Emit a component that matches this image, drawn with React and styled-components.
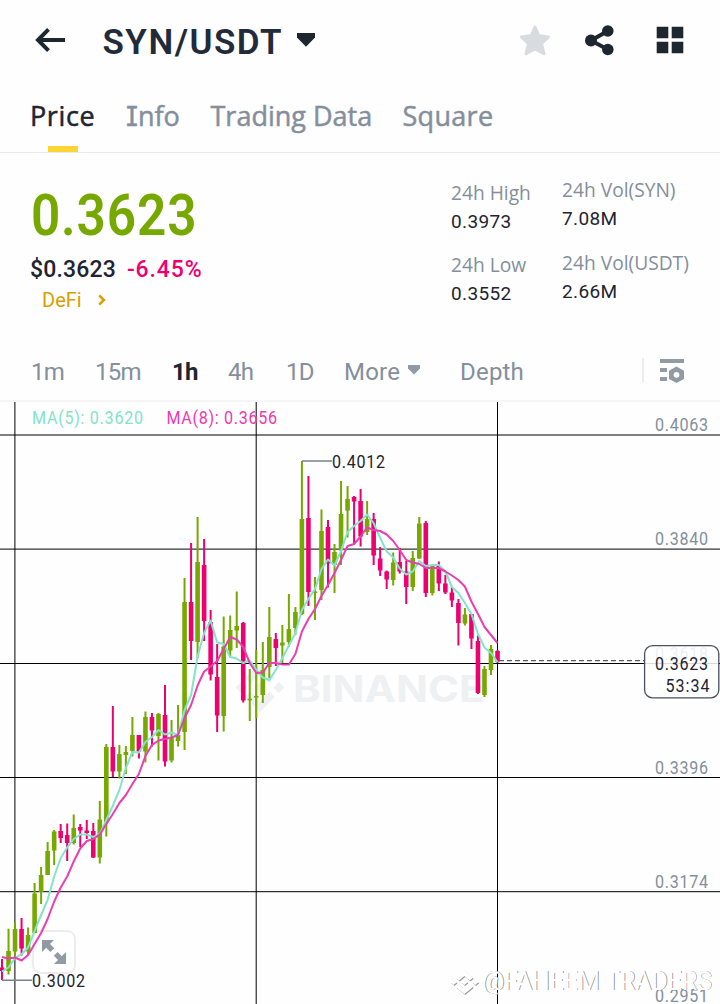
import React from 'react';
import styled, { createGlobalStyle } from 'styled-components';

const UP = '#76a800';
const DOWN = '#ef0070';
const STEP = 6.52;
const FIRST_X = 2;
const NARROW = 0.92;

// [high, low, body top, body bottom, 1 = up / 0 = down]
const candles = [
  [959, 980, 967.5, 971, 0], [928.7, 974.5, 951, 971, 1], [922, 959, 929, 951.5, 1],
  [918, 955.5, 929, 948.5, 0], [927.5, 955, 935, 951.5, 1], [883, 933, 893.5, 933, 1],
  [867, 904, 875, 892, 1], [842, 875, 851, 875, 1], [830, 865, 831.5, 850.5, 1],
  [824, 843, 831, 838, 0], [823.5, 861, 835, 843, 0], [814.5, 844.5, 828, 843, 1],
  [824, 847, 827, 830.5, 0], [820, 839, 830.5, 833, 0], [823, 858, 831, 857.5, 0],
  [801, 863.5, 819.5, 857.5, 1], [744, 836.5, 747, 822, 1], [706, 777, 747, 771.5, 0],
  [745, 778.5, 754, 771.5, 1], [746, 774, 752, 755, 1], [717, 756.5, 735, 751, 1],
  [735, 758.5, 735, 751.5, 0], [711.5, 762.5, 717, 751.5, 1], [713, 746.5, 717, 730.5, 0],
  [713, 760.5, 714, 736, 1], [685, 766.5, 715, 761.5, 0], [720, 762.5, 737.5, 760.5, 1],
  [705, 746.5, 735, 741, 1], [578, 750, 602, 732, 1], [543, 660, 602, 641, 0],
  [517, 658, 562, 642, 1], [539, 641, 565, 621, 0], [610, 680.5, 622, 674.5, 0],
  [644, 732, 677, 715.5, 0], [616.5, 731.5, 646.5, 716, 1], [615.5, 656, 630, 650.5, 1],
  [591.5, 648, 626, 630.5, 1], [622, 702.5, 623, 700.5, 0], [669, 721, 698.8, 700.3, 1],
  [650, 718, 696, 697.5, 1], [642, 703, 670, 695, 1], [607, 678, 637, 667, 1],
  [633, 666, 639, 648, 0], [625, 663, 642.5, 645.5, 1], [594, 647, 629, 642, 1],
  [607, 635, 612, 628, 1], [461, 615, 519, 614, 1], [476, 606, 518, 592, 0],
  [577, 620, 591.5, 593, 1], [509.5, 600, 531, 590, 1], [520, 587.5, 527, 563.5, 0],
  [544, 593, 552, 565, 1], [481, 565, 514, 550.5, 1], [486, 537.5, 499, 510.5, 1],
  [496, 544, 497, 501.5, 0], [489, 546.5, 501, 536.5, 0], [501, 535, 519, 532, 1],
  [513, 565, 519, 555.5, 0], [547, 576, 558.5, 570.5, 0], [570.5, 589, 571.5, 579.5, 0],
  [552.5, 585.5, 562.5, 580, 1], [548, 573.5, 562, 571.5, 0], [561, 604, 571.5, 587, 0],
  [551, 591, 558, 587, 1], [517, 559, 523.5, 558.5, 1], [521, 597, 523, 593, 0],
  [565, 595.5, 566, 593, 1], [561.5, 591, 566, 583.5, 0], [575, 594, 583.5, 592.5, 0],
  [587, 607, 592.5, 600.5, 0], [599, 645.5, 603, 623, 0], [608, 625.5, 614.5, 623.5, 1],
  [614, 649, 614, 638.5, 0], [635.5, 694, 641, 693, 0], [666, 697, 669, 695, 1],
  [645, 675, 649, 670, 1], [650, 663, 651, 661.5, 0],
];

const ma5 = [
  971.5, 967.5, 958, 954, 947.5, 931, 915, 900, 876.5, 858, 847.5, 839, 834.5, 834.5, 837, 834,
  820, 806, 790, 768, 752, 752.5, 742, 737, 730, 734.5, 732.5, 735, 710, 695, 656.5, 633,
  620.5, 642.5, 644, 657, 658.5, 663, 660.5, 670, 677.5, 680, 670, 658, 645.5, 633, 610, 599,
  589, 569, 559.5, 565.5, 551, 532, 526, 521, 514.5, 523, 538, 551.5, 557.5, 568.5, 574.5, 571.5,
  561, 566, 565, 565, 571.5, 587, 593, 603, 614, 634, 647.5, 653, 662,
];

const ma8 = [
  957, 958.5, 957.5, 960.5, 955, 944, 933, 919, 901.5, 887.5, 876.5, 861.5, 848.5, 841, 839, 834.5,
  824, 814, 803, 795, 784, 774, 756, 745, 740.5, 739, 737.5, 735, 718, 705, 685.5, 671.5,
  666.5, 661, 649, 637, 639.5, 647, 663, 673, 672.5, 663, 663, 664.5, 664.5, 654, 631.5, 619,
  609, 596, 585, 573, 560, 546, 544, 536.5, 527.5, 530, 531, 534.5, 541, 550, 560, 562.5,
  564, 568, 568, 568, 571.5, 575.5, 580, 586.5, 601.5, 614, 627, 635, 643,
];

const axis = [
  ['0.4063', 431], ['0.3840', 545], ['0.3618', 660],
  ['0.3396', 774], ['0.3174', 888], ['0.2951', 1002],
];

const stats = [
  { label: '24h High', value: '0.3973' },
  { label: '24h Vol(SYN)', value: '7.08M', raised: 3 },
  { label: '24h Low', value: '0.3552' },
  { label: '24h Vol(USDT)', value: '2.66M', raised: 2 },
];

const BINANCE_PATH =
  'M16.624 13.9202l2.7175 2.7154-7.353 7.353-7.353-7.352 2.7175-2.7164 4.6355 4.6595 4.6356-4.6595zm4.6366-4.6366L24 12l-2.7154 2.7164L18.5682 12l2.6924-2.7164zm-9.272.001l2.7163 2.6914-2.7164 2.7174v-.001L9.2721 12l2.7164-2.7154zm-9.2722-.001L5.4088 12l-2.6914 2.6924L0 12l2.7164-2.7164zM11.9885.0115l7.353 7.329-2.7174 2.7154-4.6356-4.6356-4.6355 4.6595-2.7174-2.7154 7.353-7.353z';

const xAt = (i) => FIRST_X + i * STEP;
const toPoints = (values) => values.map((y, i) => `${xAt(i).toFixed(1)},${y}`).join(' ');

// chart labels use a slightly narrowed face, w is the drawn width
const Label = ({ x, y, w, fill, children }) => (
  <ChartText transform={`translate(${x} ${y}) scale(${NARROW} 1)`} textLength={w / NARROW} fill={fill}>
    {children}
  </ChartText>
);

const Chart = () => (
  <ChartSvg viewBox="0 402 720 602">
    <g fill="#eef0f2">
      <path d={BINANCE_PATH} transform="translate(235.5 663) scale(2.04)" />
      <Watermark x="293" y="701.5" textLength="191.5" lengthAdjust="spacingAndGlyphs">BINANCE</Watermark>
    </g>

    <g stroke="#000" strokeWidth="1">
      {[435, 549.1, 663.5, 777.5, 891.7].map((y) => (
        <line key={y} x1="0" x2="720" y1={y} y2={y} />
      ))}
      {[14.9, 256.2, 497.5].map((x) => (
        <line key={x} x1={x} x2={x} y1="402" y2="1004" />
      ))}
    </g>

    {axis.map(([label, y]) => (
      <Label key={label} x={655} y={y} w={53} fill="#848e9c">{label}</Label>
    ))}

    {/* full screen button */}
    <rect x="33" y="931" width="42" height="42" rx="8" fill="#fff" fillOpacity="0.6" stroke="#ececec" strokeWidth="1.8" />
    <g fill="#929aa5">
      <path d="M42 940h12l-4 4 4.200 4.200-3.800 3.800-4.200-4.200-4.200 4.200z" />
      <path d="M66 964h-12l4-4-4.200-4.200 3.800-3.800 4.200 4.200 4.200-4.200z" />
    </g>

    {candles.map(([high, low, top, bottom, up], i) => (
      <g key={i} fill={up ? UP : DOWN}>
        <rect x={xAt(i) - 1} y={high} width="2" height={low - high} />
        <rect x={xAt(i) - 2.3} y={top} width="4.6" height={bottom - top} />
      </g>
    ))}

    <MaLine points={toPoints(ma5)} stroke="#86e3c9" />
    <MaLine points={toPoints(ma8)} stroke="#e83fb1" />

    <Label x={32} y={424} w={111} fill="#83e3c8">MA(5): 0.3620</Label>
    <Label x={166.5} y={424} w={110.5} fill="#e93cb0">MA(8): 0.3656</Label>

    {/* high and low marks */}
    <path d="M302 461h30M2 980.200h30" stroke="#76808f" strokeWidth="1.400" />
    <Label x={332} y={467.5} w={53} fill="#1e2430">0.4012</Label>
    <Label x={32} y={987} w={53} fill="#1e2430">0.3002</Label>

    {/* last price tag */}
    <line x1="499" x2="644" y1="660.7" y2="660.7" stroke="#565b66" strokeWidth="1.2" strokeDasharray="5 3" />
    <rect x="644.6" y="645.6" width="74.200" height="52.300" rx="8" fill="#fff" fillOpacity="0.86" stroke="#4a505c" strokeWidth="1.3" />
    <Label x={655} y={670} w={53} fill="#1e2430">0.3623</Label>
    <Label x={665.5} y={692} w={44} fill="#1e2430">53:34</Label>

    {/* author signature */}
    <path d={BINANCE_PATH} transform="translate(451.3 971.6) scale(1.16 0.98)" fill="#9c9c9c" />
    <path d={BINANCE_PATH} transform="translate(450.5 970.6) scale(1.16 0.98)" fill="#fff" />
    <Signature x="482.700" y="990.4" textLength="230" fill="#858585">@FAHEEM TRADERS</Signature>
    <Signature x="482" y="989.500" textLength="230" fill="#fff">@FAHEEM TRADERS</Signature>
  </ChartSvg>
);

const App = () => {
  return (
    <>
      <GlobalStyle />
      <Screen>
        <Header>
          <svg width="32" height="26" viewBox="0 0 32 26" fill="none" stroke="#1e2630" strokeWidth="4">
            <path d="M31 13H4M14.500 2.300L4 13l10.500 10.700" />
          </svg>
          <Pair>SYN/USDT</Pair>
          <svg width="18" height="14" viewBox="0 0 18 14" fill="#1e2630">
            <path d="M0 0h18v4.500L9 13.700 0 4.500z" />
          </svg>
          <HeaderIcons>
            <svg width="30" height="31" viewBox="0 0 30 31" fill="#d8dce1" stroke="#d8dce1" strokeWidth="3" strokeLinejoin="round">
              <path d="M15 2l3.800 8.600 9.700 1.300-7 6.800 2.500 10L15 24l-9 4.700 2.500-10-7-6.800 9.700-1.300z" />
            </svg>
            <svg width="30" height="31" viewBox="0 0 30 31" fill="#1e2630">
              <circle cx="6" cy="15.500" r="6" />
              <circle cx="22.800" cy="6" r="5.800" />
              <circle cx="22.800" cy="24.500" r="5.800" />
              <path d="M22.800 6L6 15.500l16.800 9" fill="none" stroke="#1e2630" strokeWidth="4" />
            </svg>
            <svg width="28" height="28" viewBox="0 0 28 28" fill="#1e2630">
              <path d="M.7.700h11.600v11.600H.700zM15.700.700h11.600v11.600H15.700zM.700 15.700h11.600v11.600H.700zM15.700 15.700h11.600v11.600H15.700z" />
            </svg>
          </HeaderIcons>
        </Header>

        <Tabs>
          <Tab $active $spacing={0.6}>Price</Tab>
          <Tab $spacing={0}><SerifI>I</SerifI>nfo</Tab>
          <Tab $spacing={0}>Trading Data</Tab>
          <Tab $spacing={0.3}>Square</Tab>
        </Tabs>

        <Summary>
          <div>
            <Price>0.3623</Price>
            <PriceSub>
              <span>$0.3623</span>
              <Change>-6.45%</Change>
            </PriceSub>
            <Tag>
              DeFi
              <svg width="8" height="12" viewBox="0 0 8 12" fill="none" stroke="#d89f00" strokeWidth="2.6">
                <path d="M1.200 1.300L5.900 6 1.200 10.700" />
              </svg>
            </Tag>
          </div>
          <Stats>
            {stats.map((stat) => (
              <Stat key={stat.label} $raised={stat.raised}>
                <StatLabel>{stat.label}</StatLabel>
                <StatValue>{stat.value}</StatValue>
              </Stat>
            ))}
          </Stats>
        </Summary>

        <Intervals>
          <Interval>1m</Interval>
          <Interval>15m</Interval>
          <Interval $active>1h</Interval>
          <Interval>4h</Interval>
          <Interval>1D</Interval>
          <Interval $wide>
            More
            <svg width="12" height="10" viewBox="0 0 12 10" fill="#929aa5">
              <path d="M0 0h12v3.500L6 9.500 0 3.500z" />
            </svg>
          </Interval>
          <Interval $wide>Depth</Interval>
          <Divider />
          <SettingsIcon width="24" height="24" viewBox="0 0 24 24" fill="#929aa5">
            <path d="M0 0h24v4H0zM0 9h7v4H0zM0 18h7v4H0z" />
            <path fillRule="evenodd" d="M16.500 7.500l7.500 4.200v8.200L16.500 24 9 19.900v-8.200zM16.500 12.900a2.900 2.900 0 1 0 0 5.800 2.900 2.900 0 0 0 0-5.800z" />
          </SettingsIcon>
        </Intervals>

        <Chart />
      </Screen>
    </>
  );
};

const GlobalStyle = createGlobalStyle`
  body {
    margin: 0;
    background: #fff;
    font-family: Roboto, "Liberation Sans", sans-serif;
  }

  svg {
    display: block;
    flex-shrink: 0;
  }
`;

const Screen = styled.div`
  width: 720px;
  height: 1004px;
  display: flex;
  flex-direction: column;
  overflow: hidden;
  background: #fefefe;
  color: #1e2430;
`;

const Header = styled.header`
  height: 80px;
  box-sizing: border-box;
  display: flex;
  align-items: center;
  padding: 0 36px 0 34px;
`;

const Pair = styled.h1`
  box-sizing: border-box;
  width: 231px;
  margin: 0;
  padding: 6px 0 0 36.5px;
  font-size: 35px;
  line-height: 42px;
  font-weight: 600;
  letter-spacing: 1.5px;
  color: #222b3a;
  white-space: nowrap;
`;

const HeaderIcons = styled.div`
  margin-left: auto;
  display: flex;
  align-items: center;
  gap: 35px;

  svg:last-child {
    margin-left: 6px;
  }
`;

const Tabs = styled.nav`
  height: 72px;
  display: grid;
  grid-template-columns: 96px 84.5px 192px auto;
  padding-left: 30px;
  border-bottom: 1px solid #e9e9e9;
`;

const Tab = styled.span`
  position: relative;
  padding-top: 16px;
  font-family: "Open Sans", "Noto Sans", sans-serif;
  font-size: 27px;
  line-height: 40px;
  font-weight: 500;
  letter-spacing: ${({ $spacing }) => $spacing}px;
  white-space: nowrap;
  color: ${({ $active }) => ($active ? '#1e2430' : '#848e9c')};
  -webkit-text-stroke: 0.5px currentColor;

  &::after {
    content: '';
    display: ${({ $active }) => ($active ? 'block' : 'none')};
    position: absolute;
    left: 18px;
    bottom: 0;
    width: 30px;
    height: 6px;
    background: #fcd535;
  }
`;

const SerifI = styled.span`
  font-family: Inter, sans-serif;
  font-feature-settings: "cv08";
  font-weight: 400;
`;

const Summary = styled.section`
  height: 187px;
  display: flex;
  justify-content: space-between;
  padding-left: 30px;
`;

const Price = styled.div`
  width: 200px;
  margin-top: 29px;
  padding-left: 1px;
  font-size: 57px;
  line-height: 67px;
  font-weight: 600;
  letter-spacing: 1px;
  color: ${UP};
  transform: scaleX(0.9);
  transform-origin: left;
`;

const PriceSub = styled.div`
  display: flex;
  gap: 11px;
  margin-top: 8px;
  font-size: 23px;
  line-height: 26px;
  font-weight: 500;
  letter-spacing: 0.15px;
`;

const Change = styled.span`
  color: ${DOWN};
  letter-spacing: 0.9px;
`;

const Tag = styled.div`
  display: flex;
  align-items: center;
  gap: 16px;
  margin: 5px 0 0 12px;
  font-size: 20px;
  line-height: 24px;
  color: #d89f00;
`;

const Stats = styled.div`
  display: grid;
  grid-template-columns: 111px 158px;
  grid-auto-rows: 72px;
  padding-top: 26px;
`;

const Stat = styled.div`
  margin-top: -${({ $raised }) => $raised || 0}px;
`;

const StatLabel = styled.div`
  font-family: "Open Sans", "Noto Sans", sans-serif;
  font-size: 19.2px;
  line-height: 28px;
  color: #848e9c;
  white-space: nowrap;
`;

const StatValue = styled.div`
  font-size: 19px;
  line-height: 30px;
  letter-spacing: 0.35px;
`;

const Intervals = styled.div`
  height: 60px;
  box-sizing: content-box;
  display: grid;
  grid-template-columns: 64px 77px 56px 58px 58px 116px 182px 17.5px auto;
  align-items: center;
  padding-left: 31px;
  border-bottom: 2px solid #f5f5f5;
`;

const Interval = styled.span`
  display: flex;
  align-items: center;
  gap: ${({ $wide }) => ($wide ? '8px' : 0)};
  padding-top: 3px;
  font-size: 24px;
  line-height: 30px;
  font-weight: ${({ $active }) => ($active ? 700 : 400)};
  letter-spacing: ${({ $wide }) => ($wide ? '0.2px' : '-0.8px')};
  color: ${({ $active }) => ($active ? '#1e2430' : '#848e9c')};

  svg {
    margin-bottom: 3px;
  }
`;

const SettingsIcon = styled.svg`
  margin-top: 2px;
`;

const Divider = styled.span`
  width: 2px;
  height: 24px;
  background: #eaecef;
`;

const ChartSvg = styled.svg`
  width: 720px;
  height: 602px;
`;

const ChartText = styled.text`
  font-size: 17.5px;
`;

const MaLine = styled.polyline`
  fill: none;
  stroke-width: 2;
  stroke-linejoin: round;
`;

const Watermark = styled.text`
  font-family: Inter, sans-serif;
  font-size: 37px;
  font-weight: 700;
`;

const Signature = styled.text`
  font-size: 25px;
  font-weight: 400;
`;

export default App;
